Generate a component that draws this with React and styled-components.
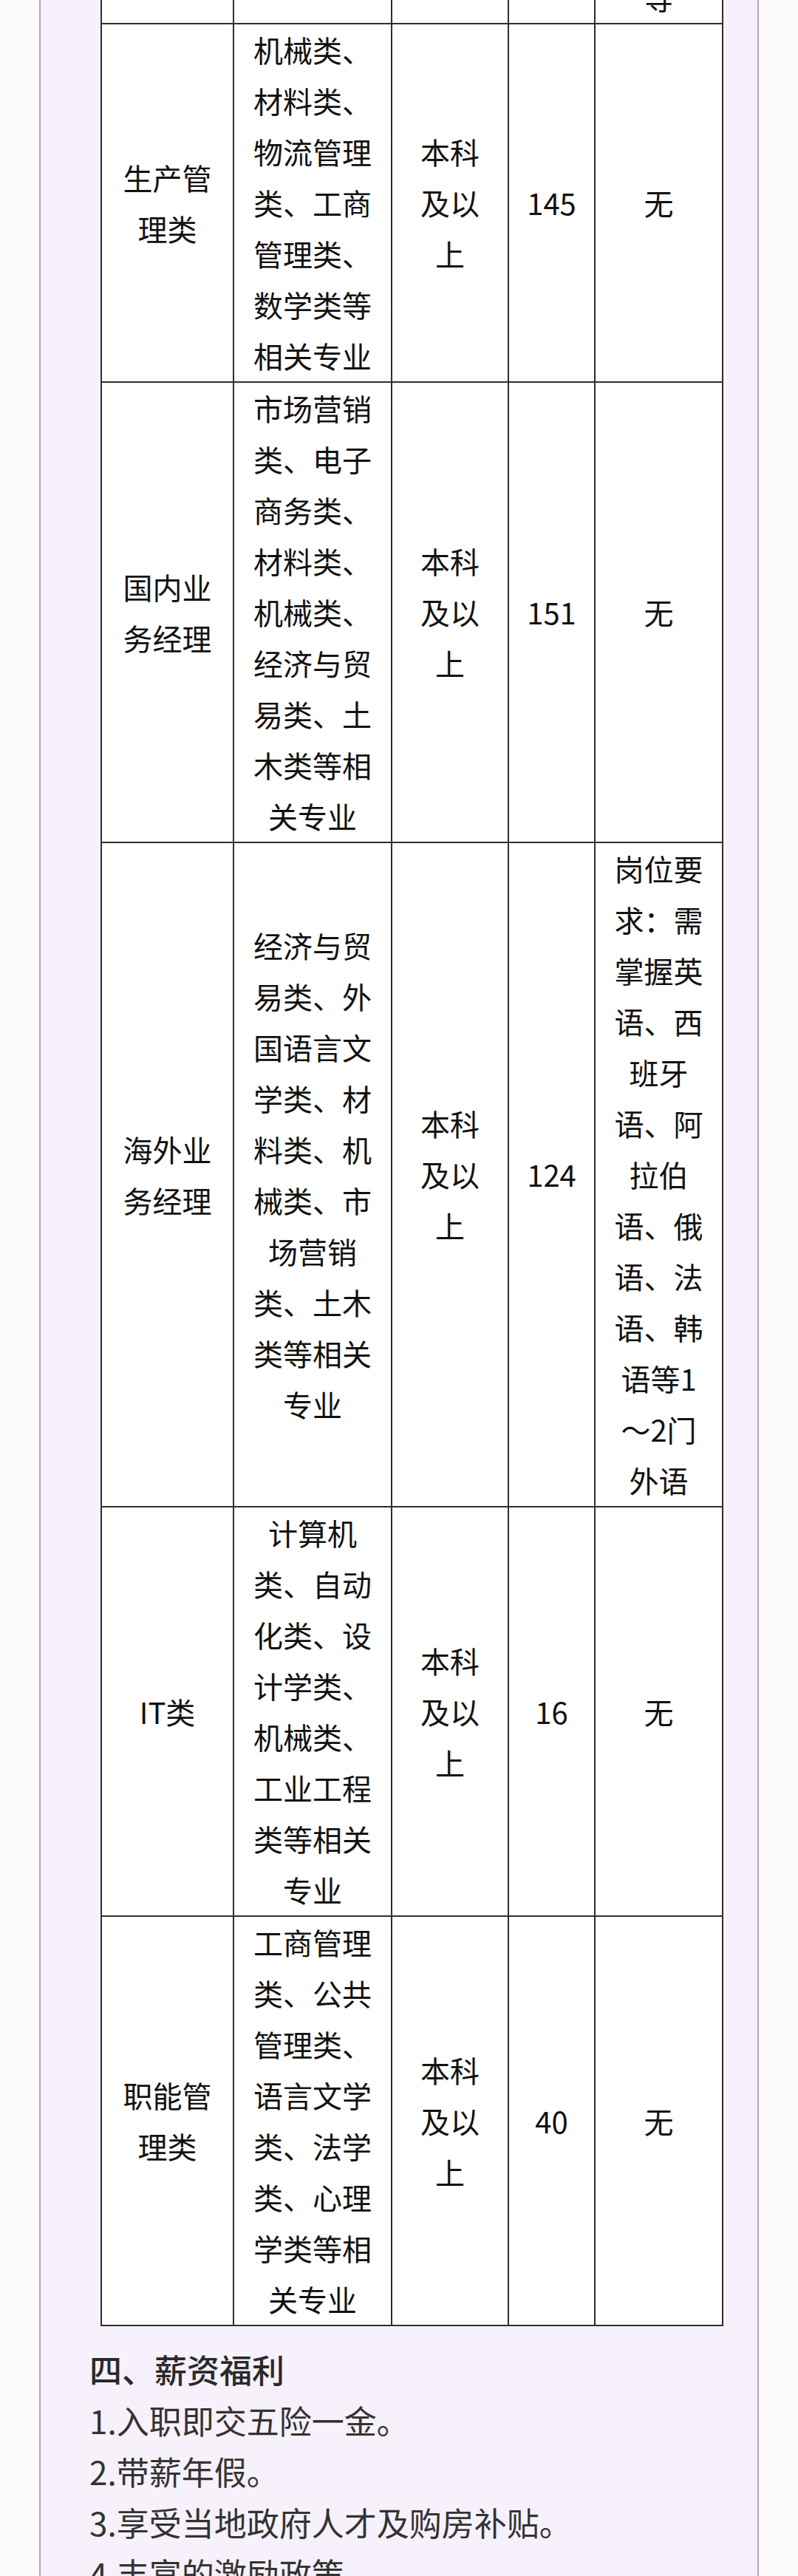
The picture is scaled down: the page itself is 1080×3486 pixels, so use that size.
import React from 'react'
import styled, { createGlobalStyle } from 'styled-components'

const GlobalStyle = createGlobalStyle`
  html, body {
    margin: 0;
    padding: 0;
    background: #fcfafd;
  }
  body {
    font-family: "Noto Sans CJK SC", "Noto Sans", sans-serif;
  }
`

const columns = [179, 214, 158, 117, 173]

const rows = [
  { post: '', major: '', degree: '', count: '', note: '等' },
  {
    post: '生产管理类',
    major: '机械类、材料类、物流管理类、工商管理类、数学类等相关专业',
    degree: '本科及以上',
    count: '145',
    note: '无',
  },
  {
    post: '国内业务经理',
    major: '市场营销类、电子商务类、材料类、机械类、经济与贸易类、土木类等相关专业',
    degree: '本科及以上',
    count: '151',
    note: '无',
  },
  {
    post: '海外业务经理',
    major: '经济与贸易类、外国语言文学类、材料类、机械类、市场营销类、土木类等相关专业',
    degree: '本科及以上',
    count: '124',
    note: '岗位要求：需掌握英语、西班牙语、阿拉伯语、俄语、法语、韩语等1～2门外语',
  },
  {
    post: 'IT类',
    major: '计算机类、自动化类、设计学类、机械类、工业工程类等相关专业',
    degree: '本科及以上',
    count: '16',
    note: '无',
  },
  {
    post: '职能管理类',
    major: '工商管理类、公共管理类、语言文学类、法学类、心理学类等相关专业',
    degree: '本科及以上',
    count: '40',
    note: '无',
  },
]

const benefits = [
  '1.入职即交五险一金。',
  '2.带薪年假。',
  '3.享受当地政府人才及购房补贴。',
  '4.丰富的激励政策。',
]

const App = () => {
  return (
    <Page>
      <GlobalStyle />
      <Panel>
        <Table>
          <colgroup>
            {columns.map((w, i) => (
              <col key={i} style={{ width: w }} />
            ))}
          </colgroup>
          <tbody>
            {rows.map((row, i) => (
              <tr key={i}>
                <Cell>{row.post}</Cell>
                <Cell>{row.major}</Cell>
                <Cell>{row.degree}</Cell>
                <Cell>{row.count}</Cell>
                <Cell>{row.note}</Cell>
              </tr>
            ))}
          </tbody>
        </Table>
        <Heading>四、薪资福利</Heading>
        {benefits.map((b) => (
          <Line key={b}>{b}</Line>
        ))}
      </Panel>
    </Page>
  )
}

const Page = styled.div`
  padding-left: 53px;
  width: 1080px;
  box-sizing: border-box;
`

const Panel = styled.div`
  width: 974px;
  box-sizing: border-box;
  border-left: 2px solid #bb9fcb;
  border-right: 2px solid #bb9fcb;
  background: #f6f1fa;
  padding: 0 36px 240px 66px;
  overflow: hidden;
`

const Table = styled.table`
  margin: -40px 0 0 15px;
  width: 841px;
  table-layout: fixed;
  border-collapse: collapse;
  background: #fff;
`

const Cell = styled.td`
  border: 2px solid #2e2e2e;
  padding: 0 20px;
  font-size: 40px;
  line-height: 69px;
  color: #111;
  text-align: center;
  vertical-align: middle;
`

const Heading = styled.div`
  margin-top: 24px;
  font-size: 44px;
  line-height: 69px;
  font-weight: 500;
  color: #2a2a2a;
`

const Line = styled.div`
  font-size: 44px;
  line-height: 69px;
  color: #333;
`

export default App
